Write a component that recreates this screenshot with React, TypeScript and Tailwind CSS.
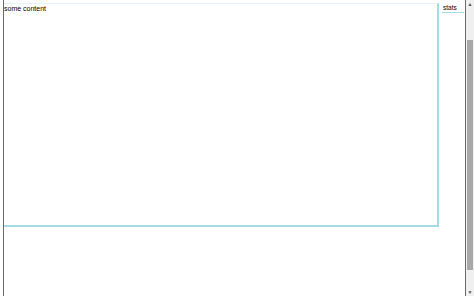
import React from "react";

export default function App() {
  return (
    <div className="w-[474px] h-[296px] bg-white flex overflow-hidden" style={{ fontFamily: '"Liberation Sans", Arial, sans-serif' }}>
      <div className="w-[3px] shrink-0" />
      <div className="w-[1px] shrink-0 bg-[#6b6b6b]" />
      <div className="w-[435px] shrink-0 pt-[3px]">
        <div className="h-[224px] border-t border-t-[#e3f4f7] border-r-2 border-r-[#a3dbe4] border-b-2 border-b-[#a3dbe4] text-[7px] leading-[8px] text-black pt-[1px]">
          some content
        </div>
      </div>
      <div className="w-[26px] shrink-0 pt-[4px] pl-[3px]">
        <div className="text-[6.5px] leading-[7px] text-black pl-[1px] w-[22px] border-b border-b-[#a3dbe4] pb-[1px]">stats</div>
      </div>
      <div className="w-[1px] shrink-0 bg-[#6b6b6b]" />
      <div className="w-[8px] shrink-0 bg-[#f0f0f0] flex flex-col items-center">
        <div className="h-[8px] text-[5px] leading-[8px] text-[#505050]">▲</div>
        <div className="mt-[32px] h-[230px] w-[6px] bg-[#a8a8a8]" />
        <div className="flex-1" />
        <div className="h-[8px] text-[5px] leading-[8px] text-[#505050]">▼</div>
      </div>
    </div>
  );
}
